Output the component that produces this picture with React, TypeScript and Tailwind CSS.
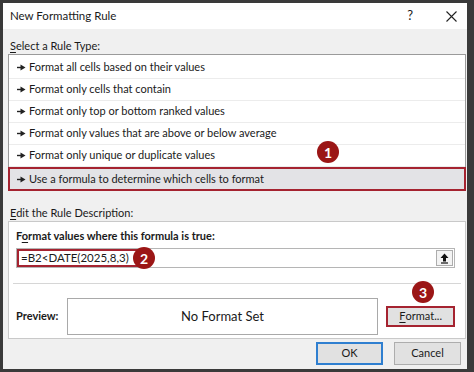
import type { ReactNode } from 'react';

const RULES = [
  'Format all cells based on their values',
  'Format only cells that contain',
  'Format only top or bottom ranked values',
  'Format only values that are above or below average',
  'Format only unique or duplicate values',
  'Use a formula to determine which cells to format',
];

function Pointer() {
  return (
    <svg width="9" height="7" viewBox="0 0 9 7" className="shrink-0">
      <path d="M0 3.5h4" stroke="#222" strokeWidth="1.4" />
      <path d="M3.5 0.5L8.5 3.5L3.5 6.5Z" fill="#222" />
    </svg>
  );
}

function Badge({ n, className }: { n: string; className: string }) {
  return (
    <div
      className={`absolute flex h-[22px] w-[22px] items-center justify-center rounded-full bg-[#9b1616] text-[14px] font-bold text-white ${className}`}
    >
      {n}
    </div>
  );
}

function U({ children }: { children: ReactNode }) {
  return <span className="underline underline-offset-2">{children}</span>;
}

export default function App() {
  return (
    <div
      className="relative h-[372px] w-[474px] bg-[#3a3a3a] pb-[3px] pl-[3px] pr-[7px] pt-[3px] text-[11px] text-[#1a1a1a]"
      style={{ fontFamily: 'Lato, "Noto Sans", sans-serif' }}
    >
      <div className="flex h-full flex-col">
        {/* title bar */}
        <div className="flex h-[26px] shrink-0 items-center bg-white pl-[7px] pr-[10px]">
          <span className="flex-1 text-[11.5px]">New Formatting Rule</span>
          <span className="mr-[33px] text-[13px]">?</span>
          <svg width="11" height="11" viewBox="0 0 11 11">
            <path d="M0.5 0.5L10.5 10.5M10.5 0.5L0.5 10.5" stroke="#222" strokeWidth="1.1" />
          </svg>
        </div>

        <div className="flex flex-1 flex-col bg-[#f0f0f0] pl-[5px] pr-[1px]">
          <div className="mt-[8px] h-[17px] pl-[2px] leading-[17px]">
            <U>S</U>elect a Rule Type:
          </div>

          <div className="border border-[#9a9a9a] bg-white pt-[2px]">
            {RULES.map((rule, i) => {
              const selected = i === RULES.length - 1;
              return (
                <div
                  key={rule}
                  className={
                    selected
                      ? '-mx-px -mb-px flex h-[24px] items-center gap-[3px] border-2 border-[#a52330] bg-[#e3e3e6] pl-[7px]'
                      : 'flex h-[22px] items-center gap-[3px] border-b border-[#ececec] pl-[8px]'
                  }
                >
                  <Pointer />
                  <span>{rule}</span>
                </div>
              );
            })}
          </div>

          <div className="mt-[13px] h-[17px] pl-[2px] leading-[17px]">
            <U>E</U>dit the Rule Description:
          </div>

          <div className="flex h-[118px] flex-col border border-[#c9c9c9] bg-white pl-[7px] pr-[10px]">
            <div className="mt-[5px] h-[17px] font-bold leading-[17px]">
              F<U>o</U>rmat values where this formula is true:
            </div>
            <div className="mt-[4px] flex h-[20px] items-stretch border border-[#b5b5b5]">
              <div className="flex items-center border-2 border-[#a52330] pl-[2px] pr-[8px] text-[11.5px]">
                =B2&lt;DATE(2025,8,3)
              </div>
              <div className="flex-1" />
              <div className="m-[1px] flex w-[17px] items-center justify-center border border-[#adadad] bg-[#f3f3f3]">
                <svg width="9" height="11" viewBox="0 0 9 11">
                  <path d="M4.5 0.5L8.5 5H6v3.5H3V5H0.5Z" fill="#111" />
                  <path d="M1 10h7" stroke="#111" strokeWidth="1.2" />
                </svg>
              </div>
            </div>
            <div className="-ml-[3px] -mr-[6px] mt-[15px] h-px bg-[#d6d6d6]" />
            <div className="mt-[14px] flex items-center">
              <span className="w-[51px] font-bold">Preview:</span>
              <div className="flex h-[37px] w-[313px] items-center justify-center border border-[#a9a9a9] text-[13px]">
                No Format Set
              </div>
              <div className="ml-[8px] flex h-[21px] w-[69px] items-center justify-center border-2 border-[#a52330] bg-[#e1e1e1]">
                <U>F</U>ormat...
              </div>
            </div>
          </div>

          <div className="mt-[3px] flex justify-end gap-[11px] pr-[5px]">
            <div className="flex h-[23px] w-[67px] items-center justify-center border-2 border-[#2f7fd0] bg-[#e1e1e1]">
              OK
            </div>
            <div className="flex h-[23px] w-[67px] items-center justify-center border border-[#adadad] bg-[#e1e1e1]">
              Cancel
            </div>
          </div>
        </div>
      </div>

      <Badge n="1" className="left-[317px] top-[141px]" />
      <Badge n="2" className="left-[133px] top-[247px]" />
      <Badge n="3" className="left-[412px] top-[281px]" />
    </div>
  );
}
